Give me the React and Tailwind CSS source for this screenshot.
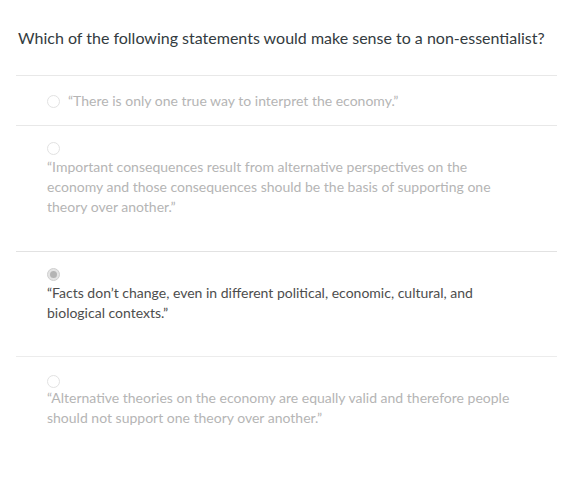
import React from "react";

function Radio({ checked }) {
  if (checked) {
    return (
      <span className="inline-flex h-[13px] w-[13px] shrink-0 items-center justify-center rounded-full border border-[#cfcfcf] bg-[#e4e4e4]">
        <span className="h-[7px] w-[7px] rounded-full bg-[#b4b4b4]" />
      </span>
    );
  }
  return <span className="inline-block h-[13px] w-[13px] shrink-0 rounded-full border border-[#e2e2e2] bg-white" />;
}

export default function App() {
  return (
    <div className="min-h-[482px] w-[576px] bg-white pl-4 text-[14px] leading-5" style={{ fontFamily: "Lato, 'Open Sans', sans-serif" }}>
      <div className="w-[541px]">
        <div className="h-[75px] whitespace-nowrap pl-[2px] pt-[27px] text-[16px] leading-[22px] text-[#333b40]">
          Which of the following statements would make sense to a non-essentialist?
        </div>
        <div className="flex h-[50px] items-center gap-2 border-t border-[#e8e8e8] pl-[31px] pt-[1px] text-[#b5b5b5]">
          <Radio />
          <span>“There is only one true way to interpret the economy.”</span>
        </div>
        <div className="h-[126px] border-t border-[#e8e8e8] pl-[31px] pr-[50px] pt-[16px] text-[#b5b5b5]">
          <div className="mb-[2px] flex">
            <Radio />
          </div>
          <div>“Important consequences result from alternative perspectives on the economy and those consequences should be the basis of supporting one theory over another.”</div>
        </div>
        <div className="h-[105px] border-t border-[#e2e2e2] pl-[31px] pr-[50px] pt-[16px] text-[#4d4d4d]">
          <div className="mb-[2px] flex">
            <Radio checked />
          </div>
          <div>“Facts don’t change, even in different political, economic, cultural, and biological contexts.”</div>
        </div>
        <div className="border-t border-[#ececec] pl-[31px] pr-[20px] pt-[18px] text-[#b5b5b5]">
          <div className="flex">
            <Radio />
          </div>
          <div>“Alternative theories on the economy are equally valid and therefore people should not support one theory over another.”</div>
        </div>
      </div>
    </div>
  );
}
